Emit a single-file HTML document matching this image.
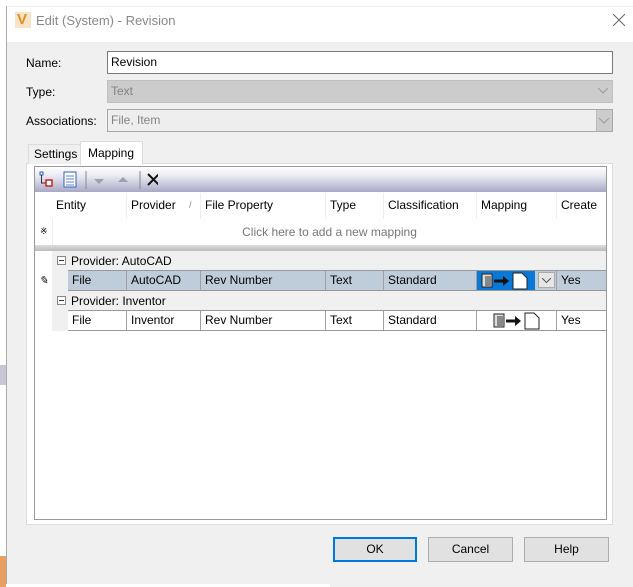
<!DOCTYPE html>
<html><head><meta charset="utf-8"><style>
*{box-sizing:border-box;margin:0;padding:0}
body{width:633px;height:587px;position:relative;overflow:hidden;background:#f0f0f0;font-family:"Liberation Sans",sans-serif;font-size:12px;color:#000}
.a{position:absolute}
.lbl{font-size:12px}
.cell{position:absolute;top:0;height:100%;border-right:1px solid #a0a0a0;padding-left:4px;line-height:19px;white-space:nowrap}
.hd{position:absolute;top:0;height:26px;border-right:1px solid #eee;padding-left:4px;line-height:24px}
.btn{position:absolute;top:537px;height:25px;background:#e1e1e1;border:1px solid #adadad;text-align:center;line-height:23px}
</style></head><body>
<div class="a" style="left:0;top:0;width:633px;height:587px;background:#fff"></div>
<div class="a" style="left:0;top:365px;width:6px;height:20px;background:#c8c8d4"></div>
<div class="a" style="left:0;top:556px;width:6px;height:31px;background:#e8a060"></div>
<div class="a" style="left:330px;top:584px;width:303px;height:3px;background:#f0f0f0"></div>
<div class="a" style="left:6px;top:6px;width:627px;height:578px;background:#f0f0f0;border-left:1px solid #aaa"></div>
<div class="a" style="left:7px;top:7px;width:626px;height:35px;background:#fff"></div>
<div class="a" style="left:15px;top:12px;width:16px;height:16px;background:#f7e3c8"></div>
<div class="a" style="left:17px;top:11px;font-weight:bold;color:#e09020;font-size:15px">V</div>
<div class="a" style="left:36px;top:13px;color:#888;font-size:13px">Edit (System) - Revision</div>
<svg class="a" style="left:613px;top:14px" width="12" height="12"><path d="M0 0L12 12M12 0L0 12" stroke="#666" stroke-width="1"/></svg>
<div class="a lbl" style="left:26px;top:56px">Name:</div>
<div class="a" style="left:107px;top:51px;width:506px;height:23px;background:#fff;border:1px solid #7a7a7a;padding-left:3px;line-height:20px">Revision</div>
<div class="a lbl" style="left:26px;top:85px">Type:</div>
<div class="a" style="left:107px;top:80px;width:506px;height:23px;background:#ccc;border:1px solid #c0c0c0;padding-left:3px;line-height:20px;color:#838383">Text</div>
<svg class="a" style="left:598px;top:88px" width="10" height="6"><path d="M0 0L5 5L10 0" stroke="#999" fill="none"/></svg>
<div class="a lbl" style="left:26px;top:114px">Associations:</div>
<div class="a" style="left:107px;top:109px;width:506px;height:23px;background:#eee;border:1px solid #a8a8a8;padding-left:3px;line-height:20px;color:#838383">File, Item</div>
<div class="a" style="left:596px;top:110px;width:16px;height:21px;background:#ccc;border-left:1px solid #bbb"></div>
<svg class="a" style="left:599px;top:118px" width="10" height="6"><path d="M0 0L5 5L10 0" stroke="#999" fill="none"/></svg>
<div class="a" style="left:26px;top:163px;width:587px;height:362px;border:1px solid #dcdcdc;background:#fff"></div>
<div class="a" style="left:28px;top:144px;width:53px;height:20px;border:1px solid #dcdcdc;border-bottom:none;background:#f0f0f0;padding-left:5px;line-height:19px">Settings</div>
<div class="a" style="left:80px;top:141px;width:63px;height:24px;border:1px solid #dcdcdc;border-bottom:none;background:#fff;padding-left:7px;line-height:22px">Mapping</div>
<div class="a" style="left:34px;top:166px;width:573px;height:354px;border:1px solid #999;background:#fff"></div>
<div class="a" style="left:35px;top:167px;width:571px;height:25px;background:linear-gradient(#fff,#e6e6f0 40%,#a8a8c6)"></div>
<svg class="a" style="left:38px;top:171px" width="120" height="18">
<rect x="2" y="1" width="3" height="3" fill="#fff" stroke="#3060c0"/><path d="M3.5 4V12H8" stroke="#333" fill="none"/><rect x="8" y="9" width="6" height="6" fill="#fff" stroke="#d02020" stroke-width="1.5"/>
<rect x="26" y="1" width="12" height="15" fill="#fff" stroke="#3060c0"/><path d="M28 5H36M28 8H36M28 11H36M28 14H36" stroke="#6080c0"/>
<line x1="48" y1="0" x2="48" y2="18" stroke="#888"/>
<path d="M56 8H66L61 13Z" fill="#a0a0a8"/><path d="M80 11H90L85 6Z" fill="#a0a0a8"/>
<line x1="102" y1="0" x2="102" y2="18" stroke="#888"/>
<path d="M110 3L121 14M121 3L110 14" stroke="#111" stroke-width="2"/>
</svg>
<div class="a" style="left:35px;top:193px;width:571px;height:53px;background:#fff"></div>
<div class="a" style="left:52px;top:193px;width:554px;height:26px;font-size:12px">
<div class="hd" style="left:0;width:75px">Entity</div>
<div class="hd" style="left:75px;width:74px">Provider<span style="position:absolute;left:62px;color:#888;font-size:9px">/</span></div>
<div class="hd" style="left:149px;width:125px">File Property</div>
<div class="hd" style="left:274px;width:58px">Type</div>
<div class="hd" style="left:332px;width:93px">Classification</div>
<div class="hd" style="left:425px;width:80px">Mapping</div>
<div class="hd" style="left:505px;width:50px;border:none">Create</div>
</div>
<div class="a" style="left:40px;top:226px;font-size:9px">※</div>
<div class="a" style="left:52px;top:219px;width:554px;height:27px;text-align:center;line-height:26px;color:#777;border-left:1px solid #eee">Click here to add a new mapping</div>
<div class="a" style="left:35px;top:245px;width:571px;height:6px;background:linear-gradient(#ddd,#bbb)"></div>
<div class="a" style="left:52px;top:251px;width:554px;height:80px;background:#f0f0f0"></div>
<div class="a" style="left:57px;top:256px;width:9px;height:9px;border:1px solid #888;background:#fff"></div>
<div class="a" style="left:59px;top:260px;width:5px;height:1px;background:#333"></div>
<div class="a" style="left:71px;top:254px;font-size:12px">Provider: AutoCAD</div>
<div class="a" style="left:39px;top:274px;font-size:11px;font-style:italic">✎</div>
<div class="a" style="left:68px;top:270px;width:538px;height:21px;background:#bfcddb;border-top:1px solid #999;border-bottom:1px solid #999">
<div class="cell" style="left:0;width:59px">File</div>
<div class="cell" style="left:59px;width:74px">AutoCAD</div>
<div class="cell" style="left:133px;width:125px">Rev Number</div>
<div class="cell" style="left:258px;width:58px">Text</div>
<div class="cell" style="left:316px;width:93px">Standard</div>
<div class="cell" style="left:409px;width:80px;padding:0">
<div style="position:absolute;left:0;top:0;width:58px;height:19px;background:#0a78d7"></div>
<div style="position:absolute;left:61px;top:1px;width:17px;height:16px;background:#e6e6e6;border:1px solid #aaa"></div>
<svg style="position:absolute;left:65px;top:7px" width="9" height="5"><path d="M0 0L4.5 4.5L9 0" stroke="#555" fill="none"/></svg>
<svg style="position:absolute;left:4px;top:1px" width="52" height="18"><rect x="1" y="2" width="10" height="13" fill="#ddd" stroke="#222"/><rect x="4" y="4" width="6" height="10" fill="#888"/><path d="M13 9H24" stroke="#111" stroke-width="3"/><path d="M22 4L28 9L22 14Z" fill="#111"/><path d="M32 1H41L46 6V17H32Z" fill="#fff" stroke="#222"/></svg>
</div>
<div class="cell" style="left:489px;width:49px;border:none">Yes</div>
</div>
<div class="a" style="left:57px;top:296px;width:9px;height:9px;border:1px solid #888;background:#fff"></div>
<div class="a" style="left:59px;top:300px;width:5px;height:1px;background:#333"></div>
<div class="a" style="left:71px;top:294px;font-size:12px">Provider: Inventor</div>
<div class="a" style="left:68px;top:310px;width:538px;height:21px;background:#fff;border-top:1px solid #999;border-bottom:1px solid #999">
<div class="cell" style="left:0;width:59px">File</div>
<div class="cell" style="left:59px;width:74px">Inventor</div>
<div class="cell" style="left:133px;width:125px">Rev Number</div>
<div class="cell" style="left:258px;width:58px">Text</div>
<div class="cell" style="left:316px;width:93px">Standard</div>
<div class="cell" style="left:409px;width:80px;padding:0">
<svg style="position:absolute;left:16px;top:1px" width="52" height="18"><rect x="1" y="2" width="10" height="13" fill="#ddd" stroke="#222"/><rect x="4" y="4" width="6" height="10" fill="#888"/><path d="M13 9H24" stroke="#111" stroke-width="3"/><path d="M22 4L28 9L22 14Z" fill="#111"/><path d="M32 1H41L46 6V17H32Z" fill="#fff" stroke="#222"/></svg>
</div>
<div class="cell" style="left:489px;width:49px;border:none">Yes</div>
</div>
<div class="btn" style="left:333px;width:84px;border:2px solid #0078d7;line-height:21px">OK</div>
<div class="btn" style="left:428px;width:85px">Cancel</div>
<div class="btn" style="left:524px;width:85px">Help</div>
</body></html>
